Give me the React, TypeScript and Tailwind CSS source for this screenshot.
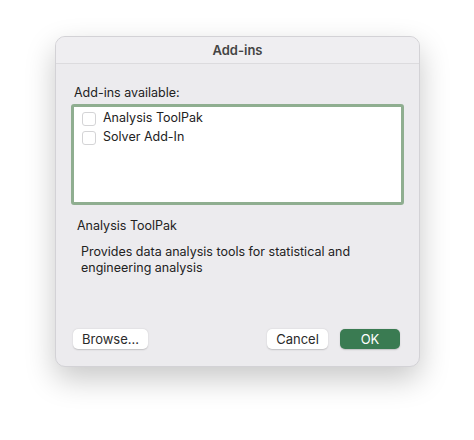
import React from 'react'

const items = ['Analysis ToolPak', 'Solver Add-In']

function Checkbox() {
  return <span className="h-[14px] w-[14px] shrink-0 rounded-[3px] border border-[#d4d4d6] bg-white" />
}

function Button({ children, primary = false, className = '' }: { children: React.ReactNode; primary?: boolean; className?: string }) {
  return (
    <button
      className={
        'flex h-[20px] items-center justify-center rounded-[5px] text-[13px] leading-none shadow-[0_0.5px_1.5px_rgba(0,0,0,0.18)] ' +
        (primary ? 'bg-[#3a7b52] text-white' : 'bg-white text-[#2a2a2a]') +
        ' ' +
        className
      }
    >
      {children}
    </button>
  )
}

export default function App() {
  return (
    <div
      className="flex h-[440px] w-[474px] items-start justify-center bg-white pt-[36px]"
      style={{ fontFamily: 'Inter, "Liberation Sans", sans-serif' }}
    >
      <div className="ml-[1px] flex h-[331px] w-[365px] flex-col overflow-hidden rounded-[10px] border border-[#d3d2d6] bg-[#ecebee] shadow-[0_12px_30px_rgba(0,0,0,0.22)]">
        <div className="flex h-[27px] shrink-0 items-center justify-center border-b border-[#dcdbde] bg-[#efeef1] pt-[2px]">
          <span className="text-[13px] font-semibold text-[#444]">Add-ins</span>
        </div>

        <div className="flex flex-1 flex-col px-[15px] pb-[17px] text-[#222]">
          <div className="mt-[21px] pl-[3px] text-[12.5px] leading-[16px]">Add-ins available:</div>

          <div className="mt-[3px] h-[101px] rounded-[3px] border-[3px] border-[#8fae90] bg-white px-[8px] pt-[2px]">
            {items.map(item => (
              <div key={item} className="flex h-[19px] items-center gap-[7px]">
                <Checkbox />
                <span className="text-[12.5px] leading-none">{item}</span>
              </div>
            ))}
          </div>

          <div className="mt-[13px] pl-[6px] text-[12.5px] leading-[16px]">Analysis ToolPak</div>
          <div className="mt-[10px] pl-[10px] text-[12.5px] leading-[16px]">
            Provides data analysis tools for statistical and
            <br />
            engineering analysis
          </div>

          <div className="mt-auto flex items-center pl-[2px] pr-[4px]">
            <Button className="w-[75px]">Browse...</Button>
            <div className="ml-auto flex gap-[12px]">
              <Button className="w-[61px]">Cancel</Button>
              <Button primary className="w-[60px]">OK</Button>
            </div>
          </div>
        </div>
      </div>
    </div>
  )
}
